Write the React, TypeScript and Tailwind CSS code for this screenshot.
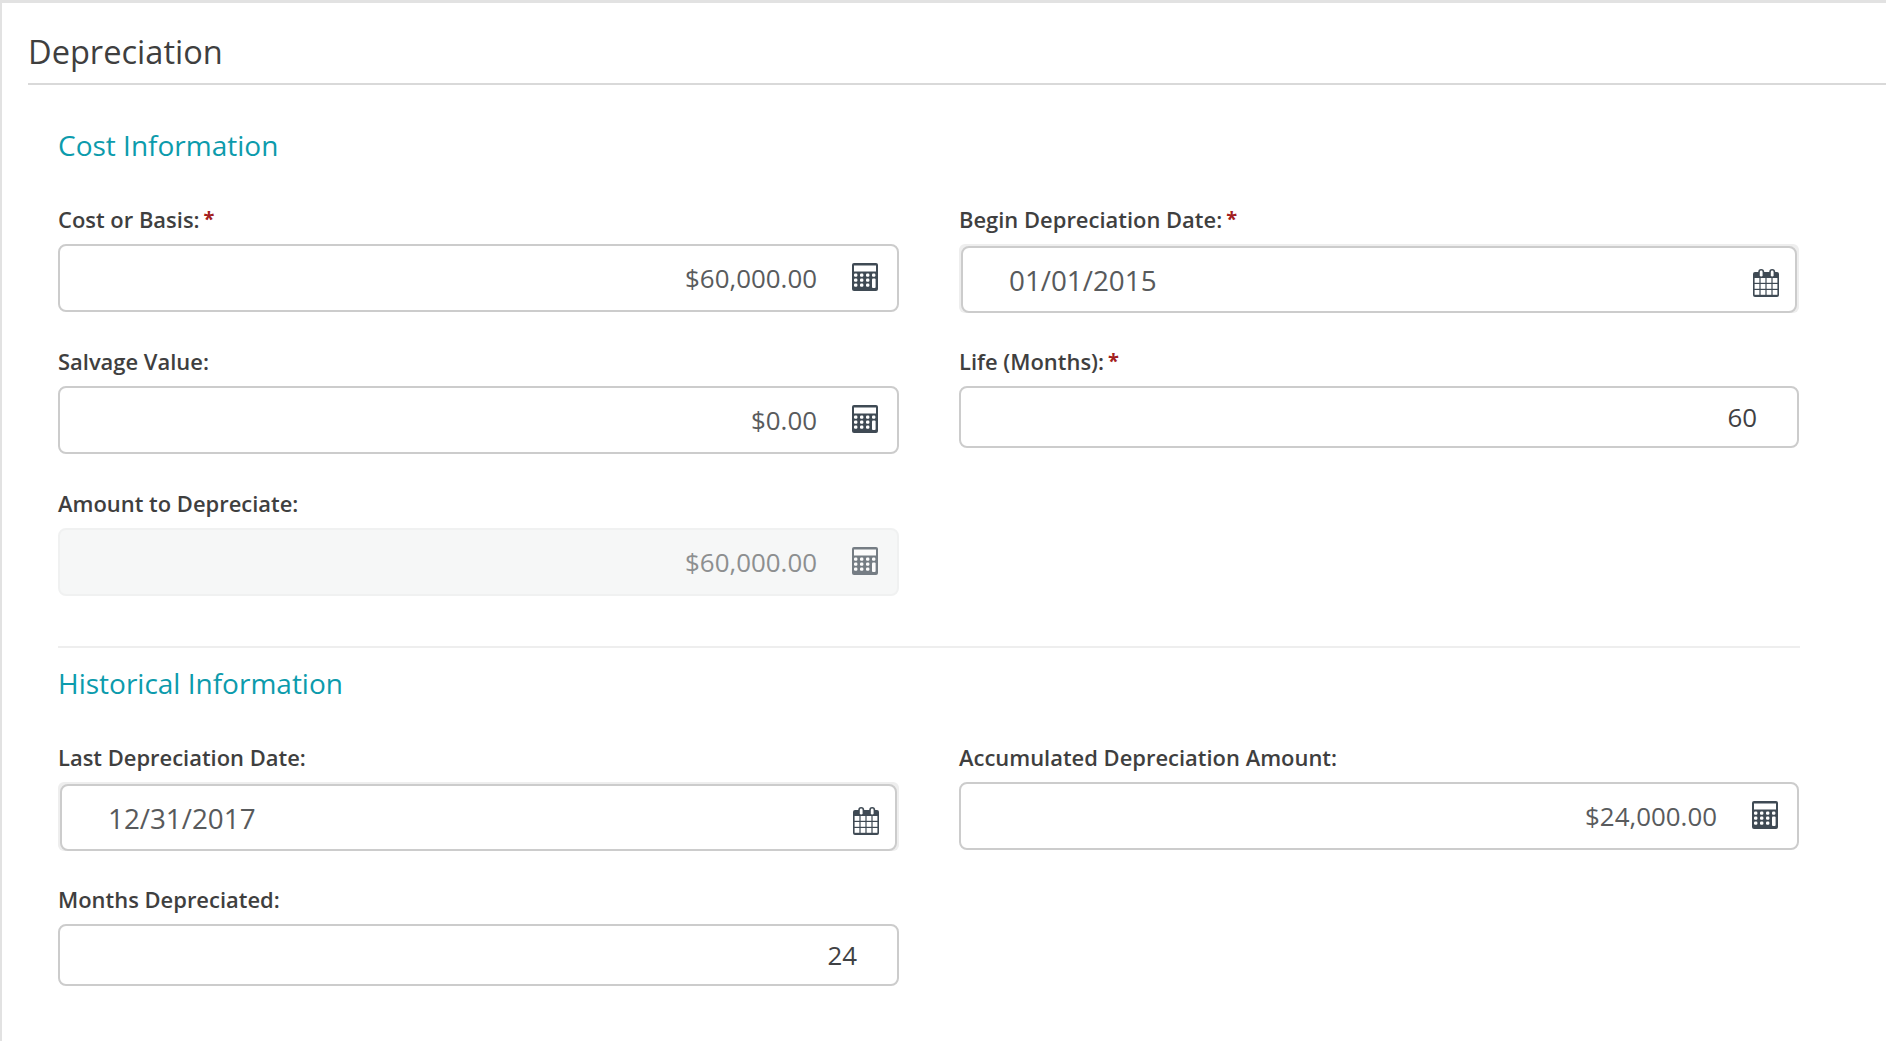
const font = "font-['Open_Sans',sans-serif]";

function CalcIcon({ faded }: { faded?: boolean }) {
  const cells: React.ReactNode[] = [];
  [10.5, 15.5, 20.5].forEach((y, r) =>
    [3.5, 9.5, 15.5, 21.5].forEach((x, c) => {
      if (c === 3 && r > 0) return;
      cells.push(<rect key={`${r}-${c}`} x={x - 1.5} y={y} width="3.4" height="3.2" rx="1.2" fill="#fff" />);
    })
  );
  return (
    <svg width="26" height="28" viewBox="0 0 26 28" className={`shrink-0 mb-[2px] ${faded ? "opacity-70" : ""}`}>
      <rect width="26" height="28" rx="2" fill="#3f4a54" />
      <rect x="2" y="2.5" width="22" height="6" fill="#fff" />
      {cells}
      <rect x="20" y="15.5" width="3.6" height="9.5" rx="1" fill="#fff" />
    </svg>
  );
}

function CalendarIcon() {
  const cells: React.ReactNode[] = [];
  [9, 15, 21].forEach((y, r) =>
    [1.6, 7.6, 13.6, 19.6].forEach((x, c) => {
      cells.push(<rect key={`${r}-${c}`} x={x} y={y} width="4.8" height="4.8" fill="#fff" />);
    })
  );
  return (
    <svg width="26" height="28" viewBox="0 0 26 28" className="shrink-0 mt-[7px]">
      <rect y="3" width="26" height="25" rx="2" fill="#3f4a54" />
      <rect x="5.2" y="0" width="6" height="8" rx="3" fill="#3f4a54" />
      <rect x="16.2" y="0" width="6" height="8" rx="3" fill="#3f4a54" />
      <rect x="6.8" y="1.6" width="2.8" height="6" rx="1.4" fill="#fff" />
      <rect x="17.8" y="1.6" width="2.8" height="6" rx="1.4" fill="#fff" />
      {cells}
    </svg>
  );
}

function Label({ text, required }: { text: string; required?: boolean }) {
  return (
    <div className="h-[28px] mb-[10px] flex items-center text-[21.95px] leading-[28px] font-semibold text-[#3f3f3f]">
      {text}
      {required && <span className="ml-[4px] text-[#a32020] font-bold text-[20px] relative -top-[1px]">*</span>}
    </div>
  );
}

function Money({ label, value, required, disabled }: { label: string; value: string; required?: boolean; disabled?: boolean }) {
  return (
    <div className="h-[142px]">
      <Label text={label} required={required} />
      <div
        className={`h-[68px] rounded-[8px] border-2 flex items-center justify-end pr-[19px] gap-[35px] text-[25.9px] ${
          disabled ? "bg-[#f6f7f7] border-[#f0f1f1] text-[#8d8f90]" : "bg-white border-[#cccccc] text-[#595b5d]"
        }`}
      >
        <span>{value}</span>
        <CalcIcon faded={disabled} />
      </div>
    </div>
  );
}

function DateField({ label, value, required }: { label: string; value: string; required?: boolean }) {
  return (
    <div className="h-[142px]">
      <Label text={label} required={required} />
      <div className="h-[69px] bg-[#eeeeee] rounded-[6px] pt-[2px] px-[2px]">
        <div className="h-[67px] bg-white rounded-[8px] border-2 border-[#cccccc] flex items-center justify-between pl-[46px] pr-[16px] text-[27.8px] text-[#585a5c]">
          <span className="mt-[2px]">{value}</span>
          <CalendarIcon />
        </div>
      </div>
    </div>
  );
}

function NumberField({ label, value, required }: { label: string; value: string; required?: boolean }) {
  return (
    <div className="h-[142px]">
      <Label text={label} required={required} />
      <div className="h-[62px] bg-white rounded-[8px] border-2 border-[#cccccc] flex items-center justify-end pr-[40px] text-[25.9px] text-[#3f4144]">
        {value}
      </div>
    </div>
  );
}

function SectionTitle({ children }: { children: React.ReactNode }) {
  return <h3 className="h-[40px] mb-[41px] flex items-center text-[28px] text-[#0c9bac]">{children}</h3>;
}

export default function App() {
  return (
    <div className={`min-h-[1041px] bg-white border-t-[3px] border-l-2 border-[#e2e2e2] ${font}`}>
      <div className="pl-[26px]">
        <h2 className="h-[82px] pt-[18px] flex items-center text-[32.6px] text-[#3f3f3f] border-b-2 border-[#d9d9d9]">Depreciation</h2>
      </div>
      <div className="pl-[56px] w-[1798px] pt-[40px]">
        <SectionTitle>Cost Information</SectionTitle>
        <div className="flex gap-[60px]">
          <div className="w-[841px]">
            <Money label="Cost or Basis:" value="$60,000.00" required />
            <Money label="Salvage Value:" value="$0.00" />
            <div className="h-[106px]">
              <Money label="Amount to Depreciate:" value="$60,000.00" disabled />
            </div>
          </div>
          <div className="w-[840px]">
            <DateField label="Begin Depreciation Date:" value="01/01/2015" required />
            <NumberField label="Life (Months):" value="60" required />
          </div>
        </div>
        <div className="mt-[50px] mb-[15px] h-[2px] bg-[#eeeeee]" />
        <SectionTitle>Historical Information</SectionTitle>
        <div className="flex gap-[60px]">
          <div className="w-[841px]">
            <DateField label="Last Depreciation Date:" value="12/31/2017" />
            <NumberField label="Months Depreciated:" value="24" />
          </div>
          <div className="w-[840px]">
            <Money label="Accumulated Depreciation Amount:" value="$24,000.00" />
          </div>
        </div>
      </div>
    </div>
  );
}
